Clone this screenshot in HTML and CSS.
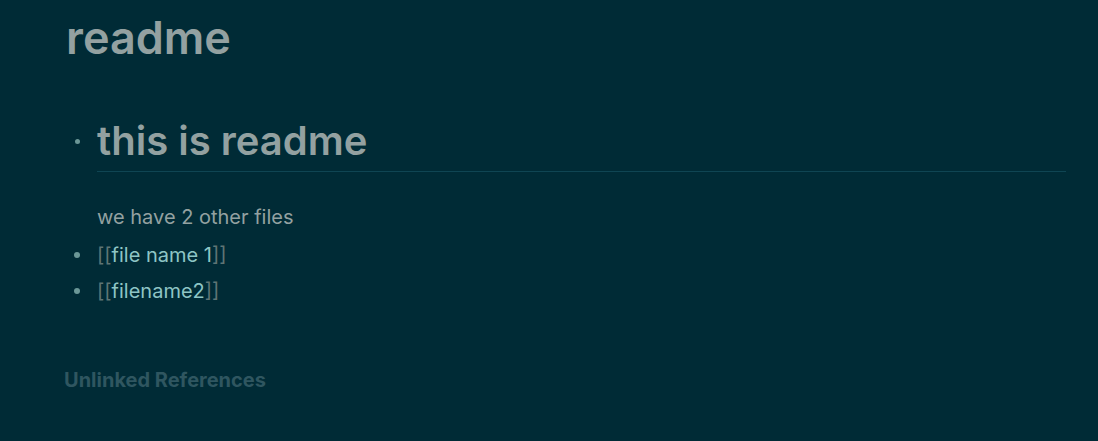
FILE: index.html
```html
<!DOCTYPE html>
<html lang="en">
<head>
    <meta charset="UTF-8">
    <title>readme</title>
    <link rel="stylesheet" href="styles.css">
</head>
<body>
    <div class="page">
        <h1 class="page-title">readme</h1>

        <div class="blocks">
            <div class="block">
                <span class="bullet small"></span>
                <div class="block-content">
                    <h2 class="heading">this is readme</h2>
                    <p class="text">we have 2 other files</p>
                </div>
            </div>
            <div class="block">
                <span class="bullet"></span>
                <div class="block-content">
                    <span class="bracket">[[</span><a class="page-ref" href="#">file name 1</a><span class="bracket">]]</span>
                </div>
            </div>
            <div class="block">
                <span class="bullet"></span>
                <div class="block-content">
                    <span class="bracket">[[</span><a class="page-ref" href="#">filename2</a><span class="bracket">]]</span>
                </div>
            </div>
        </div>

        <div class="references">Unlinked References</div>
    </div>
</body>
</html>
```

FILE: styles.css
```css
* {
    margin: 0;
    padding: 0;
    box-sizing: border-box;
}

body {
    font-family: Inter, "Noto Sans", sans-serif;
    background: #002b36;
    color: #93a1a1;
    min-height: 100vh;
}

.page {
    padding: 12px 32px 0 64px;
}

.page-title {
    font-size: 45px;
    font-weight: 600;
    color: #93a1a1;
    line-height: 52px;
    padding-left: 2px;
    margin-bottom: 51px;
}

.blocks {
    display: flex;
    flex-direction: column;
}

.block {
    display: flex;
    align-items: flex-start;
    gap: 7px;
}

.bullet {
    width: 26px;
    height: 36px;
    flex-shrink: 0;
    display: flex;
    align-items: center;
    justify-content: center;
}

.bullet::after {
    content: "";
    width: 6px;
    height: 6px;
    border-radius: 50%;
    background: #6b9797;
}

.bullet.small {
    height: 52px;
}

.bullet.small::after {
    width: 5px;
    height: 5px;
}

.block-content {
    flex: 1;
    font-size: 20px;
    line-height: 36px;
}

.heading {
    font-size: 40px;
    font-weight: 600;
    line-height: 52px;
    color: #93a1a1;
    border-bottom: 1px solid #0f4553;
    padding-bottom: 4px;
    margin-bottom: 27px;
}

.text {
    color: #93a1a1;
    margin-bottom: 2px;
}

.bracket {
    color: #5f7575;
}

.page-ref {
    color: #8ec5c5;
    text-decoration: none;
}

.references {
    margin-top: 59px;
    font-size: 20px;
    line-height: 24px;
    font-weight: 700;
    color: #2f5660;
}
```
